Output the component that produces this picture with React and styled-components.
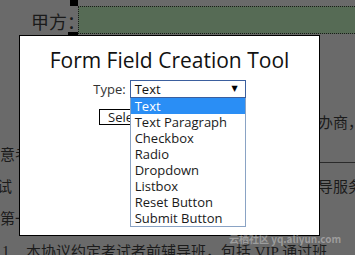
import React from "react";
import styled, { createGlobalStyle } from "styled-components";

const GlobalStyle = createGlobalStyle`
  html, body {
    margin: 0;
    padding: 0;
    background: #6a6a6a;
  }
  body {
    width: 355px;
    height: 255px;
    overflow: hidden;
  }
`;

const options = [
  "Text",
  "Text Paragraph",
  "Checkbox",
  "Radio",
  "Dropdown",
  "Listbox",
  "Reset Button",
  "Submit Button",
];

const rows = [
  { left: "", right: "办商，" },
  { left: "意考", right: "", rule: true },
  { left: "试", right: "导服务", shift: -3 },
  { left: "第一", right: "" },
];

function App() {
  return (
    <Page>
      <GlobalStyle />
      <Doc>
        <HeaderRow>
          <Label>
            甲方：
            <Handle $top />
            <Handle />
          </Label>
          <Field />
        </HeaderRow>
        <Lines>
          {rows.map((r, i) => (
            <Line key={i}>
              <LeftCell style={r.shift ? { marginLeft: r.shift } : undefined}>
                {r.left}
              </LeftCell>
              <MiddleCell />
              <RightCell $rule={r.rule}>{r.right}</RightCell>
            </Line>
          ))}
          <BottomLine>
            <Num>1</Num>
            <Para>
              本协议约定考试者前辅导班，包括<Latin> VIP </Latin>通过班
            </Para>
          </BottomLine>
        </Lines>
      </Doc>

      <Modal>
        <Title>Form Field Creation Tool</Title>
        <TypeRow>
          <TypeLabel>Type:</TypeLabel>
          <SelectWrap>
            <SelectBox>
              <span>Text</span>
              <Arrow>▼</Arrow>
            </SelectBox>
            <List>
              {options.map((o, i) => (
                <Option key={o} $active={i === 0}>
                  {o}
                </Option>
              ))}
            </List>
          </SelectWrap>
        </TypeRow>
        <ButtonRow>
          <SelectButton>Select Field Type</SelectButton>
        </ButtonRow>
      </Modal>

      <Watermark>云栖社区 yq.aliyun.com</Watermark>
    </Page>
  );
}

export default App;

const Page = styled.div`
  position: relative;
  width: 355px;
  height: 255px;
  overflow: hidden;
  background: #6a6a6a;
  font-family: "Noto Sans CJK SC", "Liberation Serif", serif;
  color: #1b1b1b;
`;

const Doc = styled.div`
  display: flex;
  flex-direction: column;
`;

const HeaderRow = styled.div`
  display: flex;
  height: 34px;
`;

const Label = styled.div`
  position: relative;
  width: 78px;
  box-sizing: border-box;
  padding: 9px 0 0 31px;
  font-size: 18px;
  line-height: 24px;
  white-space: nowrap;
`;

const Handle = styled.span`
  position: absolute;
  right: 0;
  top: ${(p) => (p.$top ? "0" : "32px")};
  width: ${(p) => (p.$top ? "8px" : "10px")};
  height: ${(p) => (p.$top ? "6px" : "4px")};
  background: #000;
`;

const Field = styled.div`
  flex: 1;
  margin-top: 6px;
  background: #566b55;
  border-top: 1px dotted #1a1a1a;
  border-bottom: 1px dotted #1a1a1a;
  border-left: 1px dotted #1a1a1a;
`;

const Lines = styled.div`
  display: flex;
  flex-direction: column;
  padding-top: 72px;
  font-size: 15px;
  line-height: 32px;
`;

const Line = styled.div`
  display: flex;
  height: 32px;
  white-space: nowrap;
`;

const LeftCell = styled.div`
  width: 40px;
  overflow: hidden;
`;

const MiddleCell = styled.div`
  flex: 1;
`;

const RightCell = styled.div`
  position: relative;
  width: 37px;
  ${(p) =>
    p.$rule &&
    `
    &::after {
      content: "";
      position: absolute;
      left: 0;
      right: -5px;
      top: 24px;
      height: 1px;
      background: #2a2a2a;
    }
  `}
`;

const BottomLine = styled.div`
  display: flex;
  height: 32px;
  white-space: nowrap;
  margin-top: 1px;
`;

const Num = styled.span`
  width: 27px;
  padding-left: 2px;
  font-family: "Liberation Serif", serif;
`;

const Para = styled.span`
  margin-left: -3px;
`;

const Latin = styled.span`
  font-family: "Liberation Serif", serif;
`;

const Modal = styled.div`
  position: absolute;
  left: 19px;
  top: 35px;
  width: 301px;
  height: 201px;
  box-sizing: border-box;
  background: #fff;
  border: 1px solid #000;
  font-family: "Open Sans", "Liberation Sans", sans-serif;
  color: #1a1a1a;
  display: flex;
  flex-direction: column;
  align-items: center;
`;

const Title = styled.h1`
  margin: 9px 0 0;
  font-size: 21px;
  font-weight: 400;
  line-height: 30px;
  color: #111;
`;

const TypeRow = styled.div`
  display: flex;
  align-items: center;
  gap: 4px;
  margin-top: 5px;
  font-size: 13px;
`;

const TypeLabel = styled.span`
  color: #333;
`;

const SelectWrap = styled.div`
  position: relative;
`;

const SelectBox = styled.div`
  width: 116px;
  height: 18px;
  box-sizing: border-box;
  border: 1px solid #3b5f9e;
  display: flex;
  align-items: center;
  justify-content: space-between;
  padding: 0 7px 0 4px;
  font-size: 13px;
  line-height: 16px;
  color: #111;
`;

const Arrow = styled.span`
  font-size: 8px;
  color: #000;
  font-family: "DejaVu Sans", sans-serif;
`;

const List = styled.ul`
  position: absolute;
  left: 0;
  top: 18px;
  width: 116px;
  box-sizing: border-box;
  margin: 0;
  padding: 0;
  list-style: none;
  background: #fff;
  border: 1px solid #8aa3c4;
  border-top: none;
  z-index: 2;
`;

const Option = styled.li`
  height: 16px;
  line-height: 16px;
  padding-left: 4px;
  font-size: 13px;
  color: ${(p) => (p.$active ? "#fff" : "#1a1a1a")};
  background: ${(p) => (p.$active ? "#2a8ef5" : "transparent")};
`;

const ButtonRow = styled.div`
  align-self: stretch;
  display: flex;
  padding-left: 79px;
  margin-top: 11px;
`;

const SelectButton = styled.button`
  height: 16px;
  padding: 0 8px;
  background: #fff;
  border: 1px solid #000;
  font-family: "Open Sans", "Liberation Sans", sans-serif;
  font-size: 13px;
  line-height: 13px;
  color: #1a1a1a;
`;

const Watermark = styled.div`
  position: absolute;
  left: 229px;
  top: 231px;
  font-family: "Noto Sans CJK SC", "Liberation Sans", sans-serif;
  font-size: 10px;
  font-weight: 700;
  color: rgba(255, 255, 255, 0.35);
  white-space: nowrap;
`;
